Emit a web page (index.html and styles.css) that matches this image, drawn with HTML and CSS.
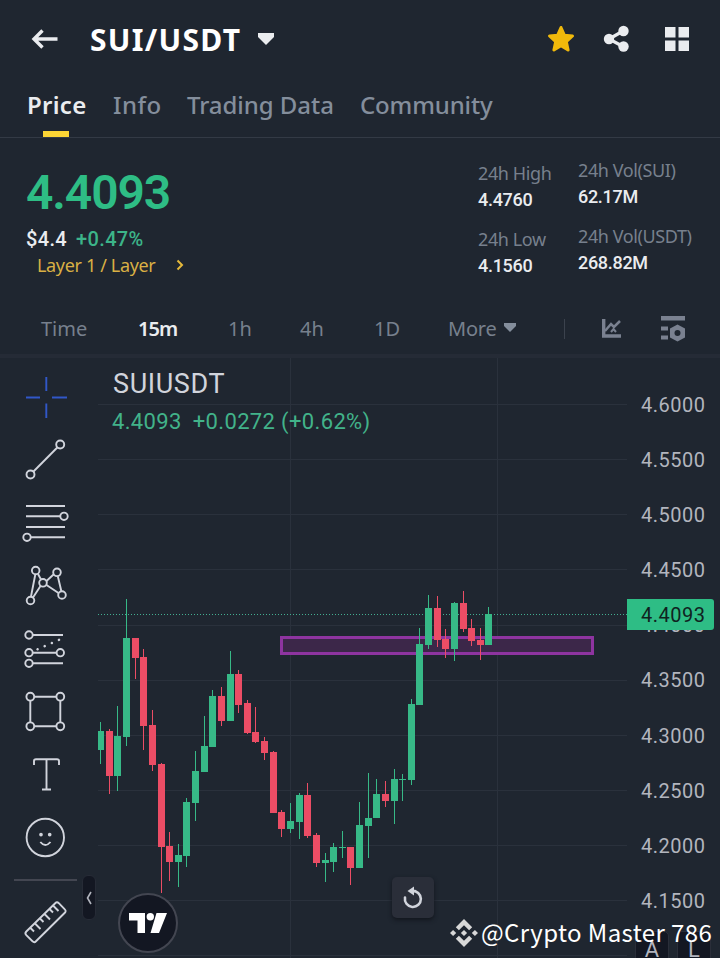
FILE: index.html
```html
<!DOCTYPE html>
<html lang="en">
<head>
<meta charset="utf-8">
<title>SUI/USDT</title>
<link rel="stylesheet" href="styles.css">
</head>
<body>
<div class="app">
  <header class="header">
    <svg class="back" width="28" height="22" viewBox="0 0 28 22"><path d="M11.500 2.500L3 11L11.500 19.500M3 11H26.500" fill="none" stroke="#eaecef" stroke-width="3.4"/></svg>
    <h1 class="pair">SUI/USDT</h1>
    <svg class="caret" width="18" height="14" viewBox="0 0 18 14"><path d="M1 1H17V5L9 13L1 5Z" fill="#eaecef"/></svg>
    <div class="actions">
      <svg width="28" height="28" viewBox="0 0 28 28"><path d="M14 2.5L17.3 10.2L25.500 11L19.300 16.600L21.100 25L14 20.700L6.900 25L8.700 16.600L2.500 11L10.700 10.200Z" fill="#f0b90b" stroke="#f0b90b" stroke-width="3" stroke-linejoin="round"/></svg>
      <svg width="28" height="28" viewBox="0 0 28 28"><path d="M22 5.500L7 14L22 22" fill="none" stroke="#eaecef" stroke-width="3.200"/><g fill="#eaecef"><circle cx="21.500" cy="6" r="5.200"/><circle cx="7" cy="14" r="5.200"/><circle cx="21.500" cy="21.500" r="5.200"/></g></svg>
      <svg width="24" height="24" viewBox="0 0 24 24" fill="#eaecef"><path d="M0 0H10.500V10.500H0ZM13.500 0H24V10.500H13.500ZM0 13.500H10.500V24H0ZM13.500 13.500H24V24H13.500Z"/></svg>
    </div>
  </header>

  <nav class="tabs">
    <span class="tab tab-price active">Price</span>
    <span class="tab tab-info">Info</span>
    <span class="tab tab-data">Trading Data</span>
    <span class="tab tab-community">Community</span>
  </nav>

  <section class="summary">
    <div class="quote">
      <div class="price">4.4093</div>
      <div class="change"><span class="fiat">$4.4</span><span class="pct">+0.47%</span></div>
      <div class="tag"><span>Layer 1 / Layer</span><svg width="8" height="12" viewBox="0 0 8 12"><path d="M1.500 1.500L6 6L1.500 10.500" fill="none" stroke="#e5b93b" stroke-width="2"/></svg></div>
    </div>
    <dl class="stats stats-range">
      <dt>24h High</dt><dd>4.4760</dd>
      <dt>24h Low</dt><dd>4.1560</dd>
    </dl>
    <dl class="stats stats-volume">
      <dt>24h Vol(SUI)</dt><dd>62.17M</dd>
      <dt>24h Vol(USDT)</dt><dd>268.82M</dd>
    </dl>
  </section>

  <div class="intervals">
    <span>Time</span>
    <span class="selected">15m</span>
    <span>1h</span>
    <span>4h</span>
    <span>1D</span>
    <span class="more">More<svg width="12" height="9" viewBox="0 0 12 9"><path d="M0 0H12V3L6 9L0 3Z" fill="#848e9c"/></svg></span>
    <i class="rule"></i>
    <svg width="20" height="20" viewBox="0 0 20 20" fill="none" stroke="#7a8190"><path d="M1.700 0V17H19" stroke-width="3.400"/><path d="M3 12L9 5L12 8L18 2" stroke-width="2.500"/><path d="M9 13L11.500 10L14 13" stroke-width="2"/></svg>
    <svg width="26" height="26" viewBox="0 0 26 26"><path d="M1 0H25V4.500H1ZM1 10.500H8V14.500H1ZM1 19.500H8V23.500H1Z" fill="#7a8190"/><path d="M17.500 8.500L25 12.500V21.500L17.500 25.500L10 21.500V12.500Z" fill="#7a8190"/><circle cx="17.500" cy="17" r="3" fill="#1f2630"/></svg>
  </div>

  <main class="chart">
    <aside class="rail">
      <svg class="tool cross" viewBox="0 0 92 63"><path d="M26 31.500H40M52 31.500H67M46.300 11V25M46.300 37.500V52"/></svg>
      <svg class="tool" viewBox="0 0 92 63"><path d="M33.500 42.500L57.300 18.500"/><circle cx="60.200" cy="15.500" r="4"/><circle cx="30.500" cy="45.500" r="4"/></svg>
      <svg class="tool" viewBox="0 0 92 63"><path d="M26 14H65M26 24.300H60M26 35H65M31 45.300H65"/><circle cx="64" cy="24.300" r="3.700"/><circle cx="27" cy="45.300" r="3.700"/></svg>
      <svg class="tool" viewBox="0 0 92 63"><path d="M31 41.500L35.300 19.500M38 19L41 24.500M46.500 26L53.500 19.500M57.800 21.300L61.300 36M46.500 30L58.500 38M40.500 31L33 42.500"/><circle cx="35.700" cy="15.500" r="3.800"/><circle cx="57" cy="17.300" r="3.800"/><circle cx="43" cy="27.800" r="3.800"/><circle cx="62" cy="40" r="3.800"/><circle cx="30.500" cy="45.500" r="3.800"/></svg>
      <svg class="tool" viewBox="0 0 92 63"><path d="M33 17H63M33 34.700H56M33 45.300H63"/><path d="M37.500 31.300L61 21" stroke-dasharray="0.1 7.700" stroke-linecap="round" stroke-width="2.500"/><circle cx="29" cy="17" r="3.700"/><circle cx="29" cy="34.700" r="3.700"/><circle cx="60.300" cy="34.700" r="3.700"/><circle cx="29" cy="45.300" r="3.700"/></svg>
      <svg class="tool" viewBox="0 0 92 63"><path d="M34.300 15.700H56.300M34.300 45.300H56.300M30.300 19.700V41.300M60.300 19.700V41.300"/><circle cx="30.300" cy="15.700" r="3.900"/><circle cx="60.300" cy="15.700" r="3.900"/><circle cx="30.300" cy="45.300" r="3.900"/><circle cx="60.300" cy="45.300" r="3.900"/></svg>
      <svg class="tool" viewBox="0 0 92 63"><path d="M34 21V17Q34 15.300 36 15.300H57Q59 15.300 59 17V21M46.500 15.300V45.500M42 45.500H51"/></svg>
      <svg class="tool" viewBox="0 0 92 63"><circle cx="45.300" cy="30.500" r="18.700"/><path d="M40.300 35Q45.300 41 50.500 35"/><circle cx="41" cy="27.600" r="0.900"/><circle cx="49.700" cy="27.600" r="0.900"/></svg>
      <hr>
      <svg class="tool" viewBox="0 0 92 63"><path d="M26.300 39.500L55.200 11.200Q57 9.500 58.800 11.200L64.800 17.400Q66.500 19 64.800 20.800L36 49.300Q34.300 51 32.500 49.300L26.300 43.200Q24.500 41.300 26.300 39.500ZM30.500 36L34 39.500M35 31.500L40.500 37M40 26.500L43.500 30M44.500 22L50 27.500M49.500 17L53 20.500M53 13.500L58.500 19"/></svg>
    </aside>

    <div class="plot">
      <svg width="529" height="600" viewBox="98 358 529 600">
        <path class="grid" d="M98 404.500H627M98 459.500H627M98 514.500H627M98 569.500H627M98 625.500H627M98 680.500H627M98 735.500H627M98 790.500H627M98 845.500H627M98 900.500H627M98 955.500H627M290.500 358V958M497.500 358V958"/>
        <path class="last" d="M98 614.500H627"/>
        <rect class="zone" x="281.500" y="637.500" width="311" height="16"/>
        <path class="wick up" d="M100.500 722V764M117.500 706V791M126.500 599V746M178.500 844V887M186.500 798V867M195.500 751V821M204.500 716V772M212.500 690V747M230.500 651V721M290.500 803V833M299.500 793V839M325.500 853V882M333.500 843V872M342.500 831V858M359.500 802V868M368.500 773V858M376.500 779V818M394.500 769V824M402.500 774V801M411.500 699V785M419.500 628V705M428.500 595V649M454.500 602V661M488.500 607V645"/>
        <path class="wick down" d="M109.500 729V794M135.500 638V679M143.500 649V750M152.500 710V771M161.500 763V893M169.500 832V881M221.500 687V726M238.500 670V713M247.500 700V734M255.500 707V743M264.500 737V760M273.500 751V813M281.500 810V837M307.500 783V838M316.500 833V867M350.500 847V885M385.500 781V807M437.500 596V647M445.500 629V658M463.500 591V632M471.500 619V646M480.500 628V660"/>
        <path class="body up" d="M100.500 731V750M117.500 736V776M126.500 638V737M178.500 855V862M186.500 802V856M195.500 771V803M204.500 746V772M212.500 696V747M230.500 674V721M290.500 821V829M299.500 795V822M325.500 860V863M333.500 847V862M342.500 847V848M359.500 825V868M368.500 818V826M376.500 794V818M394.500 779V801M402.500 779V780M411.500 704V780M419.500 644V705M428.500 608V645M454.500 603V649M488.500 614V645"/>
        <path class="body down" d="M109.500 731V776M135.500 638V658M143.500 657V726M152.500 725V765M161.500 764V847M169.500 846V862M221.500 696V721M238.500 674V705M247.500 703V733M255.500 732V742M264.500 741V753M273.500 752V813M281.500 812V829M307.500 795V836M316.500 835V863M350.500 847V868M385.500 794V801M437.500 608V640M445.500 639V649M463.500 603V629M471.500 628V641M480.500 640V645"/>
      </svg>
      <div class="legend">
        <div class="symbol">SUIUSDT</div>
        <div class="values"><span>4.4093</span><span>+0.0272 (+0.62%)</span></div>
      </div>
      <div class="brand"><svg width="38" height="20" viewBox="0 0 38 20" fill="#fff"><path d="M0 0H16V20H8.500V7.500H0ZM27.500 0H38L30 20H21.500Z"/><circle cx="21.300" cy="3.700" r="3.700"/></svg></div>
      <div class="reset"><svg width="22" height="24" viewBox="0 0 22 24"><path d="M3 11.500A8 8 0 1 0 10 5H13" fill="none" stroke="#d1d4dc" stroke-width="2.600" stroke-linecap="round"/><path d="M5.500 5L12 0.500V9.500Z" fill="#d1d4dc"/></svg></div>
    </div>

    <div class="axis">
      <span>4.6000</span><span>4.5500</span><span>4.5000</span><span>4.4500</span><span>4.4000</span><span>4.3500</span><span>4.3000</span><span>4.2500</span><span>4.2000</span><span>4.1500</span>
      <b class="current">4.4093</b>
      <div class="scale"><span>A</span><span>L</span></div>
    </div>

    <div class="handle"><svg width="6" height="14" viewBox="0 0 6 14"><path d="M5 1L1.500 7L5 13" fill="none" stroke="#b2b5be" stroke-width="1.600"/></svg></div>
    <div class="signature">
      <svg width="28" height="28" viewBox="0 0 28 28" fill="#d8d8d8"><path d="M14 0L22.200 8.200L19.100 11.300L14 6.200L8.900 11.300L5.800 8.200ZM14 28L22.200 19.800L19.100 16.700L14 21.800L8.900 16.700L5.800 19.800ZM14 10.900L17.100 14L14 17.100L10.900 14ZM3.100 10.900L6.200 14L3.100 17.100L0 14ZM24.900 10.900L28 14L24.900 17.100L21.800 14Z"/></svg>
      <span>@Crypto Master 786</span>
    </div>
  </main>
</div>
</body>
</html>
```
FILE: styles.css
```css
* { box-sizing: border-box; }
body { margin: 0; background: #1f2630; font-family: "Noto Sans", sans-serif; color: #eaecef; }
svg { display: block; flex: none; }
.app { width: 720px; height: 958px; overflow: hidden; display: flex; flex-direction: column; white-space: nowrap; }

.header { height: 80px; display: flex; align-items: center; padding: 0 31px; }
.back { margin-top: -3px; }
.pair { margin: 0 0 0 31px; width: 154px; font-size: 30px; font-weight: 700; line-height: 40px; letter-spacing: 1.3px; color: #fff; }
.caret { margin: -3px 0 0 13px; }
.actions { margin-left: auto; display: flex; align-items: center; gap: 28px; margin-top: -3px; }
.actions svg:first-child { margin-right: -1px; }
.actions svg:last-child { margin-left: 7px; }

.tabs { height: 58px; display: flex; padding: 0 27px; border-bottom: 1px solid #333a45; font-size: 24px; font-weight: 500; line-height: 50px; color: #848e9c; }
.tab { position: relative; }
.tab-info { width: 74px; letter-spacing: 0.5px; }
.tab-data { width: 173px; letter-spacing: -0.05px; }
.tab-community { letter-spacing: -0.15px; }
.tabs .active { width: 59px; margin-right: 27px; font-weight: 600; letter-spacing: 0.3px; color: #eaecef; }
.active::after { content: ""; position: absolute; left: 16px; top: 51px; width: 26px; height: 6px; background: #fcd535; }

.summary { height: 166px; display: grid; grid-template-columns: 451px 100px 1fr; padding-left: 27px; align-items: start; }
.price { margin-top: 25px; margin-left: -1px; font-family: Roboto, sans-serif; font-size: 48px; font-weight: 600; line-height: 60px; letter-spacing: -1.1px; color: #2ebd85; }
.change { display: flex; gap: 9px; margin-left: -1px; font-family: Roboto, sans-serif; font-size: 20px; font-weight: 500; line-height: 26px; margin-top: 3px; letter-spacing: 0.35px; }
.pct { color: #3cb489; }
.tag { display: flex; align-items: center; gap: 21px; padding-left: 10px; font-size: 18px; line-height: 26px; letter-spacing: -0.35px; color: #d9b044; }
.stats { margin: 0; font-size: 18px; line-height: 26px; }
.stats-range { padding-top: 22px; }
.stats-volume { padding-top: 19px; }
.stats dt { color: #77808d; letter-spacing: -0.4px; }
.stats dd { margin: 1px 0 13px; font-family: Roboto, sans-serif; font-weight: 500; letter-spacing: -0.3px; color: #eaecef; }

.intervals { height: 50px; display: grid; grid-template-columns: 97px 90px 72px 74px 74px 116px 38px 58px 1fr; align-items: center; padding-left: 41px; font-size: 20px; line-height: 50px; color: #77808d; }
.intervals span { height: 50px; }
.intervals .selected { font-weight: 600; letter-spacing: -1px; color: #eaecef; }
.more { display: flex; align-items: center; gap: 7px; letter-spacing: -0.2px; }
.more svg { margin-top: -4px; }
.rule { width: 1px; height: 20px; background: #3b424d; }
.intervals > svg { margin-top: -1px; }

.chart { position: relative; height: 604px; border-top: 4px solid #252b36; display: flex; }
.rail { width: 98px; padding-top: 8px; }
.tool { width: 92px; height: 63px; fill: none; stroke: #d1d4dc; stroke-width: 1.900; }
.cross { stroke: #3157c8; }
.rail hr { width: 63px; height: 2px; border: 0; background: #434651; margin: 9px 0 11px 14px; }
.plot { position: relative; width: 529px; }
.grid { stroke: #2a313c; stroke-width: 1; }
.last { stroke: #43ae91; stroke-dasharray: 1 2; }
.zone { fill: #3c2749; stroke: #8e34a0; stroke-width: 3; }
.wick { stroke-width: 1; }
.body { stroke-width: 7; }
.up { stroke: #37b987; }
.down { stroke: #eb4d65; }
.legend { position: absolute; left: 14px; top: 8px; font-family: Roboto, sans-serif; }
.symbol { margin-left: 1px; font-size: 27px; line-height: 36px; letter-spacing: 0.6px; color: #d1d4dc; }
.values { display: flex; gap: 11px; margin-top: 6px; font-size: 22px; line-height: 28px; letter-spacing: 0.35px; color: #42b38a; }
.brand { position: absolute; left: 20px; top: 535px; width: 60px; height: 60px; border: 2px solid #434651; border-radius: 50%; background: #131722; display: grid; place-items: center; }
.reset { position: absolute; left: 294px; top: 519px; width: 42px; height: 41px; border-radius: 5px; background: #2a2e39; box-shadow: 0 2px 4px #12161d; display: grid; place-items: center; }
.axis { position: relative; width: 93px; padding: 20px 0 0 14px; font-family: Roboto, sans-serif; font-size: 20px; color: #b2b5be; }
.axis > span { display: block; height: 55.100px; line-height: 55.100px; letter-spacing: 0.5px; }
.current { position: absolute; left: 0; top: 241px; width: 87px; height: 31px; padding-left: 14px; border-radius: 0 3px 3px 0; background: #2ebd85; color: #10231f; font-weight: 400; line-height: 32px; letter-spacing: 0.5px; }
.scale { position: absolute; left: 8px; top: 573px; display: flex; gap: 8px; font-size: 22px; color: #b2b5be; }
.scale span { width: 34px; height: 36px; border: 1px solid #2a2e39; border-radius: 5px; background: #131722; text-align: center; line-height: 36px; }
.handle { position: absolute; left: 82px; top: 517px; width: 14px; height: 45px; border: 1px solid #262b36; border-radius: 6px; background: #131722; display: grid; place-items: center; }
.signature { position: absolute; left: 450px; top: 558px; display: flex; align-items: center; gap: 3px; font-family: "Noto Sans CJK SC", sans-serif; font-size: 24px; line-height: 36px; letter-spacing: 0.4px; color: #fff; }
.signature span { margin-top: -2px; }
```
